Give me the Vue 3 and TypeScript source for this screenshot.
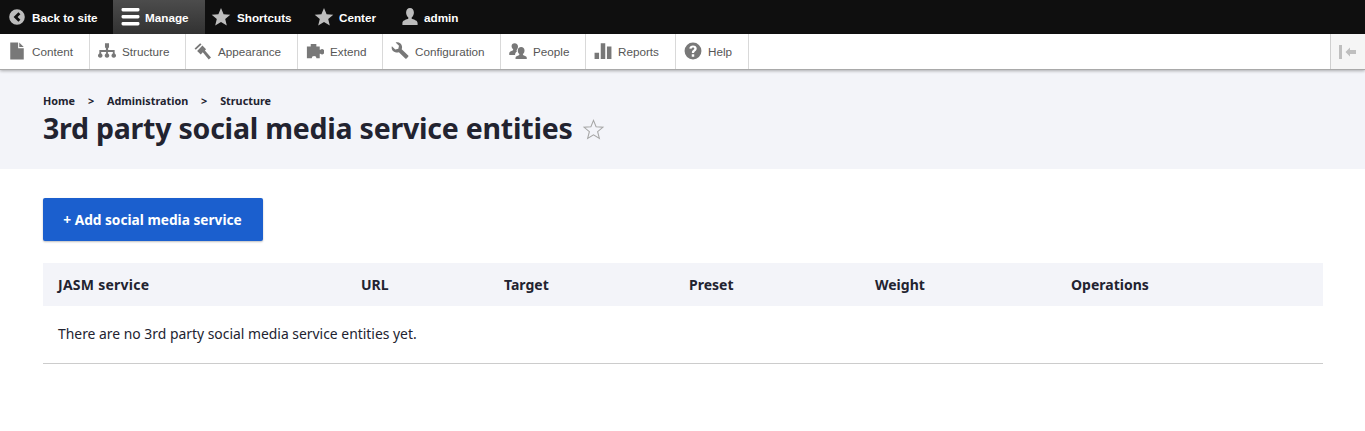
<script setup lang="ts">
interface Tab { label: string; icon: string; active?: boolean }
interface MenuItem { label: string; icon: string; width: number }

const tabs: Tab[] = [
  { label: 'Back to site', icon: 'back' },
  { label: 'Manage', icon: 'menu', active: true },
  { label: 'Shortcuts', icon: 'star' },
  { label: 'Center', icon: 'star' },
  { label: 'admin', icon: 'user' }
]

const menu: MenuItem[] = [
  { label: 'Content', icon: 'content', width: 90 },
  { label: 'Structure', icon: 'structure', width: 96 },
  { label: 'Appearance', icon: 'appearance', width: 112 },
  { label: 'Extend', icon: 'extend', width: 85 },
  { label: 'Configuration', icon: 'config', width: 118 },
  { label: 'People', icon: 'people', width: 85 },
  { label: 'Reports', icon: 'reports', width: 90 },
  { label: 'Help', icon: 'help', width: 73 }
]

const crumbs = ['Home', 'Administration', 'Structure']

const columns = [
  { label: 'JASM service', width: 303 },
  { label: 'URL', width: 143 },
  { label: 'Target', width: 185 },
  { label: 'Preset', width: 186 },
  { label: 'Weight', width: 196 },
  { label: 'Operations', width: 267 }
]
</script>

<template>
  <div class="page">
    <nav class="topbar">
      <a v-for="t in tabs" :key="t.label" class="tab" :class="[`tab-${t.icon}`, { active: t.active }]">
        <svg class="tab-icon" viewBox="0 0 20 20" aria-hidden="true">
          <template v-if="t.icon === 'back'">
            <path fill="#bdbdbd" fill-rule="evenodd" d="M10 2.200a7.800 7.800 0 1 1 0 15.600a7.800 7.800 0 0 1 0-15.600ZM11.400 5.200 6.600 10l4.800 4.800 2-2L10.600 10l2.800-2.800Z" />
          </template>
          <template v-else-if="t.icon === 'menu'">
            <rect x="0.500" y="1" width="18" height="3.400" rx="1.400" fill="#fff" />
            <rect x="0.500" y="8" width="18" height="3.400" rx="1.400" fill="#fff" />
            <rect x="0.500" y="15" width="18" height="3.400" rx="1.400" fill="#fff" />
          </template>
          <template v-else-if="t.icon === 'star'">
            <path fill="#bdbdbd" d="M10 1l2.600 6.200 6.700.5-5.100 4.300 1.600 6.600L10 15l-5.800 3.600 1.600-6.600L.7 7.700l6.700-.5Z" />
          </template>
          <template v-else>
            <path fill="#bdbdbd" d="M10 1c2.400 0 3.900 1.900 3.900 4.400 0 2-.9 3.900-2 4.900-.5.500-.4 1.500.4 1.800 2.300.8 5.300 1.500 5.300 4.100V18H2.400v-1.800c0-2.600 3-3.300 5.300-4.100.8-.3.9-1.300.4-1.800-1.100-1-2-2.900-2-4.900C6.100 2.900 7.600 1 10 1Z" />
          </template>
        </svg>
        <span>{{ t.label }}</span>
      </a>
    </nav>

    <nav class="menubar">
      <a v-for="m in menu" :key="m.label" class="item" :style="{ width: m.width + 'px' }">
        <svg class="item-icon" viewBox="0 0 16 16" aria-hidden="true">
          <path v-if="m.icon === 'content'" fill="#787878" d="M2 0.500h7v5h5v10H2ZM10 0.500l4 4h-4Z" />
          <path v-else-if="m.icon === 'structure'" fill="#787878" d="M6.200 1h3.600v4H9v2.200h5.800v3.400h-1.600V8.800H8.800v1.800H7.200V8.800H2.800v1.800H1.200V7.200H7V5h-.8ZM2 10a2 2 0 1 1-.01 0ZM8 10a2 2 0 1 1-.01 0ZM14 10a2 2 0 1 1-.01 0Z" />
          <path v-else-if="m.icon === 'appearance'" fill="#787878" d="M5.500 1 .5 5.800l1.100 1.100L6.700 2.200ZM7.500 3.200 2.800 7.900 6 11l1.800-1.800 5.300 6.300 2-1.800-5.400-6.200 1-1Z" />
          <path v-else-if="m.icon === 'extend'" fill="#787878" d="M.8 4h3.400V1.800h5V4h3v2.800h.6a2.300 2.300 0 1 1 0 3.600h-.6V14.500H9.300a2.100 2.100 0 0 0-4.200 0H.8Z" />
          <path v-else-if="m.icon === 'config'" fill="#787878" d="M15.300 11.900 9.500 6.400c.7-1.800.3-3.800-1.100-5.100C7.200.2 5.600-.1 4.100.4l3 2.900-.6 2.600-2.700.7L.8 3.700c-.5 1.500-.1 3.200 1.100 4.400 1.400 1.300 3.400 1.700 5.100 1l5.700 5.500c.3.300.8.300 1.100 0l1.500-1.500c.3-.3.3-.8 0-1.200Z" />
          <path v-else-if="m.icon === 'people'" fill="#787878" d="M5 1c1.800 0 3 1.300 3 3 0 1.100-.4 2.200-1 2.900-.5.500-.3 1.200.2 1.400-1.300.8-1.800 2-1.800 3.200H.2V10c0-1.500 1.800-1.900 3-2.400.6-.2.7-.9.3-1.300C2.800 5.600 2.300 4.700 2.300 3.700 2.300 2.100 3.300 1 5 1ZM10.800 4.500c1.800 0 3 1.300 3 3 0 1.200-.5 2.300-1.200 3-.4.400-.3 1 .2 1.200 1.300.5 3 .9 3 2.300v1H5.800v-1c0-1.400 1.700-1.800 3-2.300.5-.2.600-.8.200-1.200-.7-.7-1.200-1.800-1.200-3 0-1.700 1.200-3 3-3Z" />
          <path v-else-if="m.icon === 'reports'" fill="#787878" d="M.5 9.500h4v5.500h-4ZM6 1h4v14H6ZM11.500 4h4v11h-4Z" />
          <path v-else fill="#787878" fill-rule="evenodd" d="M8 .5a7.500 7.500 0 1 1 0 15a7.500 7.500 0 0 1 0-15ZM8 3C6.200 3 4.900 4 4.700 5.800l2 .3C6.800 5.300 7.300 4.800 8 4.800c.7 0 1.200.4 1.200 1 0 .5-.3.800-1 1.300-.8.600-1.200 1.200-1.200 2.200v.5h2v-.4c0-.5.300-.8.900-1.200.9-.7 1.400-1.400 1.400-2.500C11.300 4 10 3 8 3ZM6.900 10.800V13h2.200v-2.200Z" />
        </svg>
        <span>{{ m.label }}</span>
      </a>
      <div class="spacer"></div>
      <button class="collapse" aria-label="Collapse">
        <svg viewBox="0 0 17 14" width="17" height="14" aria-hidden="true">
          <path fill="#bfbfbf" d="M0 0h3v14H0ZM6.500 7 11 2.500V5h6v4h-6v2.500Z" />
        </svg>
      </button>
    </nav>

    <header class="head">
      <ol class="crumbs">
        <li v-for="c in crumbs" :key="c"><a>{{ c }}</a></li>
      </ol>
      <div class="title-row">
        <h1>3rd party social media service entities</h1>
        <svg class="fav" viewBox="0 0 24 24" width="24" height="24" aria-hidden="true">
          <path fill="none" stroke="#a5a5a5" stroke-width="1.100" d="M12 2.500l2.700 6.700 7.100.5-5.500 4.600 1.800 7L12 17.500l-6.100 3.800 1.800-7-5.500-4.600 7.100-.5Z" />
        </svg>
      </div>
    </header>

    <main class="content">
      <a class="btn">+ Add social media service</a>
      <table class="table">
        <colgroup>
          <col v-for="c in columns" :key="c.label" :style="{ width: c.width + 'px' }" />
        </colgroup>
        <thead>
          <tr><th v-for="c in columns" :key="c.label">{{ c.label }}</th></tr>
        </thead>
        <tbody>
          <tr><td :colspan="columns.length">There are no 3rd party social media service entities yet.</td></tr>
        </tbody>
      </table>
    </main>
  </div>
</template>

<style>
html, body { background: #fff; }
</style>

<style scoped>
.page {
  font-family: "Noto Sans", "Open Sans", sans-serif;
  color: #222330;
  min-height: 431px;
  background: #fff;
}
.topbar {
  display: flex;
  height: 34px;
  background: #0f0f0f;
  font-family: "Liberation Sans", Arial, sans-serif;
  font-size: 11.700px;
  font-weight: 700;
  color: #fff;
}
.tab {
  display: flex;
  align-items: center;
  height: 34px;
  box-sizing: border-box;
}
.tab-icon { width: 20px; height: 20px; flex: none; }
.tab-back { width: 113px; padding-left: 7px; gap: 5px; }
.tab-menu { width: 92px; padding-left: 8px; gap: 4px; }
.tab.active { background: linear-gradient(#4c4c4c, #323232); }
.tab-star { padding-left: 6px; gap: 6px; }
.tab-star:nth-child(3) { width: 103px; }
.tab-star:nth-child(4) { width: 85px; padding-left: 6px; gap: 5px; }
.tab-user { padding-left: 7px; gap: 4px; }
.menubar {
  display: flex;
  height: 35px;
  background: #fff;
  box-shadow: 0 1px 0 #a9a9a9, 0 2px 3px rgba(0,0,0,.3);
  position: relative;
  z-index: 1;
  font-family: "Liberation Sans", Arial, sans-serif;
  font-size: 11.700px;
  color: #565656;
}
.item {
  display: flex;
  align-items: center;
  box-sizing: border-box;
  padding-left: 8px;
  gap: 6px;
  border-right: 1px solid #d9d9d9;
}
.item-icon { width: 18px; height: 18px; flex: none; margin-top: -1px; }
.spacer { flex: 1; }
.collapse {
  width: 35px;
  height: 35px;
  padding: 0 2px 0 0;
  background: #f5f5f5;
  border: 0;
  border-left: 1px solid #cfcfcf;
  display: flex;
  align-items: center;
  justify-content: center;
}
.head {
  background: #f3f4f9;
  height: 100px;
  box-sizing: border-box;
  padding: 25px 43px 0;
}
.crumbs {
  display: flex;
  list-style: none;
  margin: 0;
  padding: 0;
  font-size: 10.800px;
  font-weight: 700;
  line-height: 14px;
}
.crumbs li + li::before {
  content: ">";
  display: inline-block;
  width: 32px;
  text-align: center;
  font-weight: 700;
}
.title-row {
  display: flex;
  align-items: center;
  margin-top: 2px;
}
h1 {
  margin: 0;
  font-size: 28.500px;
  line-height: 37px;
  font-weight: 700;
  letter-spacing: -0.23px;
}
.fav { margin-left: 9px; margin-top: 2px; width: 23px; height: 23px; }
.content { padding: 29px 42px 0 43px; }
.btn {
  display: inline-flex;
  align-items: center;
  justify-content: center;
  width: 220px;
  height: 43px;
  padding-bottom: 1px;
  padding-right: 1px;
  box-sizing: border-box;
  background: #1b5fce;
  border-radius: 2px;
  box-shadow: 0 1px 2px rgba(0,0,0,.25);
  color: #fff;
  font-size: 13.700px;
  font-weight: 700;
}
.table {
  display: table;
  width: 1280px;
  margin-top: 22px;
  table-layout: fixed;
  border-collapse: collapse;
  font-size: 13.900px;
}
th {
  height: 43px;
  padding: 0 15px;
  background: #f3f4f9;
  text-align: left;
  font-weight: 700;
  font-size: 14px;
}
th:first-child { letter-spacing: 0.25px; }
td {
  height: 57px;
  padding: 0 15px 2px;
  box-sizing: border-box;
  border-bottom: 1px solid #ccc;
}
</style>
